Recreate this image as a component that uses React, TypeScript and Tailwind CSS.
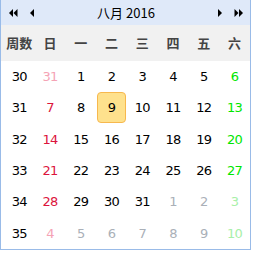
import React from "react";

type Cell = { d: number; c: string };

const weeks: { w: number; days: Cell[] }[] = (() => {
  const black = "text-black";
  const sun = "text-[#dc143c]";
  const sat = "text-[#00e600]";
  const oSun = "text-[#f5a3b5]";
  const oSat = "text-[#a8f0a8]";
  const o = "text-[#aab0b8]";
  const mk = (arr: number[], outMask: boolean[]): Cell[] =>
    arr.map((d, i) => {
      const out = outMask[i];
      let c = black;
      if (i === 0) c = out ? oSun : sun;
      else if (i === 6) c = out ? oSat : sat;
      else c = out ? o : black;
      return { d, c };
    });
  const f = [false, false, false, false, false, false, false];
  return [
    { w: 30, days: mk([31, 1, 2, 3, 4, 5, 6], [true, false, false, false, false, false, false]) },
    { w: 31, days: mk([7, 8, 9, 10, 11, 12, 13], f) },
    { w: 32, days: mk([14, 15, 16, 17, 18, 19, 20], f) },
    { w: 33, days: mk([21, 22, 23, 24, 25, 26, 27], f) },
    { w: 34, days: mk([28, 29, 30, 31, 1, 2, 3], [false, false, false, false, true, true, true]) },
    { w: 35, days: mk([4, 5, 6, 7, 8, 9, 10], [true, true, true, true, true, true, true]) },
  ];
})();

const heads = ["周数", "日", "一", "二", "三", "四", "五", "六"];

function TriL({ double }: { double?: boolean }) {
  return double ? (
    <svg width="9" height="8" viewBox="0 0 9 8">
      <polygon points="4,0 4,8 0,4" fill="#000" />
      <polygon points="8.5,0 8.5,8 4.5,4" fill="#000" />
    </svg>
  ) : (
    <svg width="4" height="8" viewBox="0 0 4 8">
      <polygon points="4,0 4,8 0,4" fill="#000" />
    </svg>
  );
}
function TriR({ double }: { double?: boolean }) {
  return double ? (
    <svg width="9" height="8" viewBox="0 0 9 8">
      <polygon points="0.5,0 0.5,8 4.5,4" fill="#000" />
      <polygon points="5,0 5,8 9,4" fill="#000" />
    </svg>
  ) : (
    <svg width="4" height="8" viewBox="0 0 4 8">
      <polygon points="0,0 0,8 4,4" fill="#000" />
    </svg>
  );
}

export default function App() {
  return (
    <div className="w-[254px] h-[254px] bg-white">
      <div className="w-[251px] h-[250px] border border-t-0 border-[#99bbe8] flex flex-col font-['DejaVu_Sans','Noto_Sans_CJK_SC',sans-serif]">
        <div className="h-[25px] bg-[#dfe9f9] flex items-center pl-[8px] pr-[7px]">
          <div className="flex items-center gap-[12px]">
            <TriL double />
            <TriL />
          </div>
          <div className="flex-1 text-center text-[13px] text-black font-['Noto_Sans_CJK_SC',sans-serif] leading-none">
            八月 2016
          </div>
          <div className="flex items-center gap-[12px]">
            <TriR />
            <TriR double />
          </div>
        </div>
        <div className="h-[36px] bg-[#f1f1f1] grid grid-cols-[repeat(8,30.75px)] pl-[3px] items-center">
          {heads.map((h) => (
            <div
              key={h}
              className="text-center text-[13px] font-bold text-[#444] font-['Noto_Sans_CJK_SC',sans-serif]"
            >
              {h}
            </div>
          ))}
        </div>
        <div className="flex-1 grid grid-rows-6 pl-[3px] tracking-[-0.6px]">
          {weeks.map((wk) => (
            <div key={wk.w} className="grid grid-cols-[repeat(8,30.75px)] items-center">
              <div className="text-center text-[13px] text-black">{wk.w}</div>
              {wk.days.map((c, i) =>
                wk.w === 31 && c.d === 9 ? (
                  <div key={i} className="flex justify-center">
                    <div className="w-[29px] h-[31px] rounded-[4px] bg-[#fee18d] border border-[#f7b84e] flex items-center justify-center text-[13px] text-black">
                      9
                    </div>
                  </div>
                ) : (
                  <div key={i} className={"text-center text-[13px] " + c.c}>
                    {c.d}
                  </div>
                )
              )}
            </div>
          ))}
        </div>
      </div>
    </div>
  );
}
